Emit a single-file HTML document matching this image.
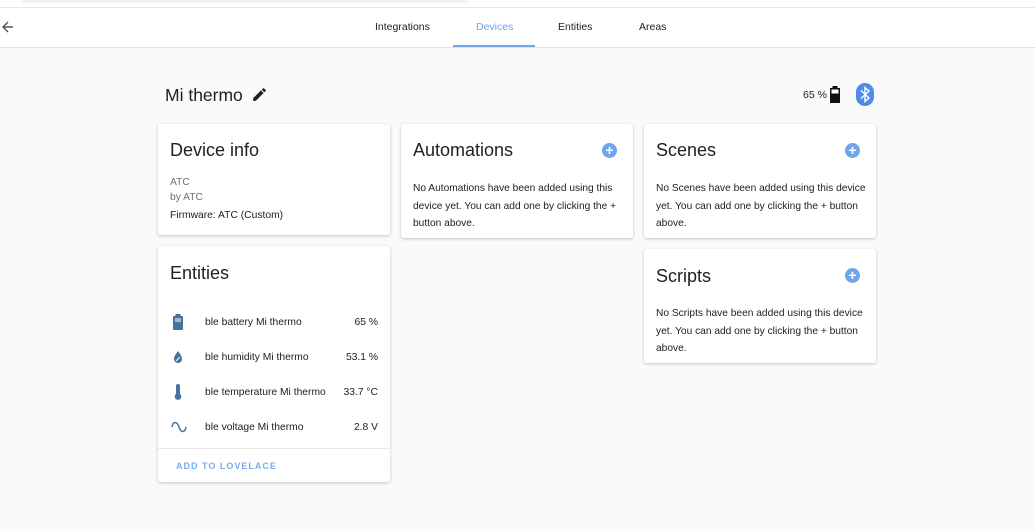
<!DOCTYPE html><html><head><style>
body{margin:0;width:1035px;height:531px;background:#fafafa;font-family:"Liberation Sans",sans-serif;position:relative;overflow:hidden;color:#212121}
.top{position:absolute;left:0;top:0;width:1035px;height:47px;background:#fff;border-bottom:1px solid #e0e0e0}
.strip{position:absolute;left:0;top:0;width:1035px;height:7px;background:#fff;border-bottom:1px solid #e8e8e8}
.pill{position:absolute;left:21px;top:0;width:448px;height:3px;background:#f1f3f4;border-radius:0 0 6px 6px}
.tab{position:absolute;top:21px;font-size:10.5px;color:#212121}
.card{position:absolute;background:#fff;border-radius:3px;box-shadow:0 1px 3px rgba(0,0,0,.22)}
h2{margin:0;position:absolute;left:12px;top:16px;font-size:18px;font-weight:normal;color:#212121}
.p{position:absolute;left:12px;top:56px;width:215px;font-size:10.2px;line-height:17.5px}
.plus{position:absolute;right:16px;top:19px;width:15px;height:15px;border-radius:50%;background:#6fa6ea;color:#fff;font-size:14px;line-height:15px;text-align:center;font-weight:bold}
.row{position:absolute;left:0;width:232px;font-size:10.3px}
.row .n{position:absolute;left:47px}
.row .v{position:absolute;right:12px}
.row svg{position:absolute;left:13px;top:-3px}
</style></head><body>
<div class="top"></div><div class="strip"><div class="pill"></div></div>
<svg style="position:absolute;left:1px;top:20px" width="14" height="14" viewBox="0 0 14 14"><path d="M12 7H2M7 2L2 7l5 5" stroke="#555" stroke-width="1.4" fill="none"/></svg>
<div class="tab" style="left:375px">Integrations</div>
<div class="tab" style="left:476px;color:#6fa6ea">Devices</div>
<div class="tab" style="left:558px">Entities</div>
<div class="tab" style="left:639px">Areas</div>
<div style="position:absolute;left:453px;top:45px;width:82px;height:2px;background:#6fa6ea"></div>
<div style="position:absolute;left:165px;top:85px;font-size:17.5px">Mi thermo</div>
<svg style="position:absolute;left:251px;top:86px" width="17" height="17" viewBox="0 0 24 24"><path d="M3 17.25V21h3.75L17.8 9.94l-3.75-3.75L3 17.25zM20.7 7.04a1 1 0 000-1.41l-2.34-2.34a1 1 0 00-1.41 0l-1.830 1.83 3.75 3.75 1.83-1.83z" fill="#212121"/></svg>
<div style="position:absolute;left:803px;top:89px;font-size:10.5px">65 %</div>
<svg style="position:absolute;left:829px;top:86px" width="12" height="17" viewBox="0 0 12 17"><rect x="3.5" y="0" width="5" height="2" fill="#111"/><rect x="1" y="2" width="10" height="15" fill="#111"/><rect x="2.5" y="3.5" width="7" height="4" fill="#fff"/></svg>
<svg style="position:absolute;left:856px;top:83px" width="18" height="23" viewBox="0 0 18 23"><rect width="18" height="23" rx="9" fill="#4e8ce8"/><path d="M5 7.5l8 7.5-4 3.5V4.5l4 3.5-8 7.5" stroke="#fff" stroke-width="1.4" fill="none"/></svg>

<div class="card" style="left:158px;top:124px;width:232px;height:111px"><h2>Device info</h2>
<div style="position:absolute;left:12px;top:51px;font-size:10.3px;color:#727272;line-height:15px">ATC<br>by ATC</div>
<div style="position:absolute;left:12px;top:86px;font-size:10.3px">Firmware: ATC (Custom)</div></div>

<div class="card" style="left:158px;top:246px;width:232px;height:236px"><h2 style="top:17px">Entities</h2>
<div class="row" style="top:71px"><svg width="14" height="16" viewBox="0 0 14 16"><rect x="4.5" y="0" width="5" height="2" fill="#44739e"/><rect x="2" y="2" width="10" height="14" rx="1" fill="#44739e"/><rect x="4" y="4" width="6" height="4" fill="#fff" opacity=".5"/></svg><span class="n">ble battery Mi thermo</span><span class="v">65 %</span></div>
<div class="row" style="top:106px"><svg width="14" height="16" viewBox="0 0 14 16"><path d="M7 2C5 5 3 7 3 10a4 4 0 008 0c0-3-2-5-4-8z" fill="#44739e"/><path d="M5 12l4-4" stroke="#fff" stroke-width="1"/></svg><span class="n">ble humidity Mi thermo</span><span class="v">53.1 %</span></div>
<div class="row" style="top:141px"><svg width="14" height="16" viewBox="0 0 14 16"><rect x="5" y="0" width="4" height="11" rx="2" fill="#44739e"/><circle cx="7" cy="12.5" r="3.3" fill="#44739e"/></svg><span class="n">ble temperature Mi thermo</span><span class="v">33.7 °C</span></div>
<div class="row" style="top:176px"><svg width="16" height="16" viewBox="0 0 16 16"><path d="M1 8C2 2 6 2 8 8s6 6 7 0" stroke="#44739e" stroke-width="1.5" fill="none"/></svg><span class="n">ble voltage Mi thermo</span><span class="v">2.8 V</span></div>
<div style="position:absolute;left:0;top:202px;width:232px;border-top:1px solid #e8e8e8"></div>
<div style="position:absolute;left:18px;top:215px;font-size:9px;font-weight:bold;letter-spacing:1px;color:#7aaaf0">ADD TO LOVELACE</div></div>

<div class="card" style="left:401px;top:124px;width:232px;height:114px"><h2>Automations</h2><div class="plus">+</div><div class="p">No Automations have been added using this device yet. You can add one by clicking the + button above.</div></div>
<div class="card" style="left:644px;top:124px;width:232px;height:114px"><h2>Scenes</h2><div class="plus">+</div><div class="p">No Scenes have been added using this device yet. You can add one by clicking the + button above.</div></div>
<div class="card" style="left:644px;top:249px;width:232px;height:114px"><h2 style="top:17px">Scripts</h2><div class="plus">+</div><div class="p">No Scripts have been added using this device yet. You can add one by clicking the + button above.</div></div>
</body></html>
